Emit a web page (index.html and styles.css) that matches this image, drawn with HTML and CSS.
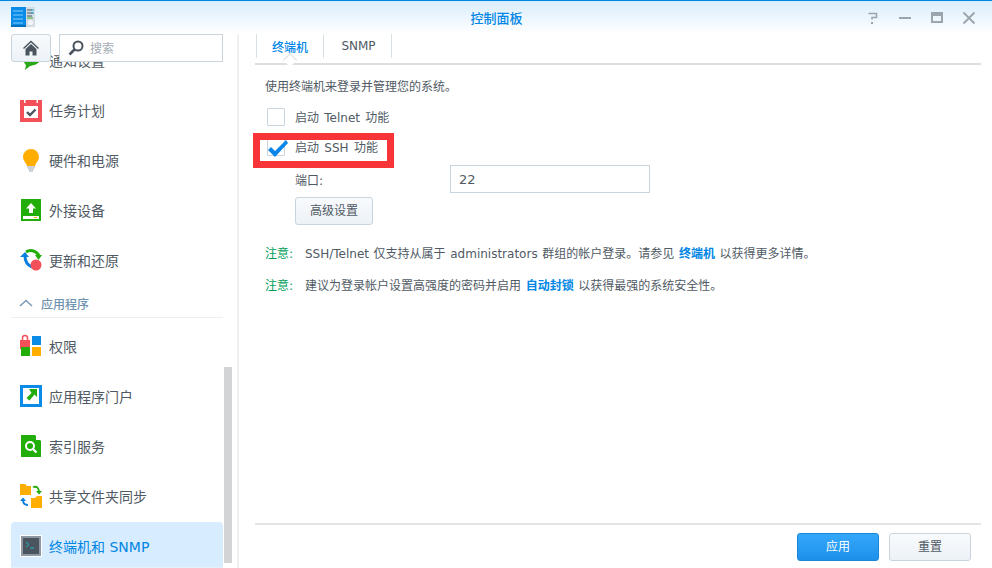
FILE: index.html
```html
<!DOCTYPE html>
<html lang="zh-CN">
<head>
    <meta charset="UTF-8">
    <title>控制面板</title>
    <link rel="stylesheet" href="styles.css">
</head>
<body>
    <div class="title-bar">
        <svg class="app-icon" width="24" height="21" viewBox="0 0 24 21">
            <rect x="0" y="0" width="15" height="20" fill="#0a8be8"/>
            <rect x="0" y="18" width="15" height="2" fill="#0670bd"/>
            <path d="M2 4h10M2 8h10M2 12h10M2 16h10" stroke="#7fd0fb" stroke-width="1"/>
            <rect x="15" y="0" width="9" height="20" fill="#d5dde3"/>
            <path d="M16 3h5M16 6h6M16 9h5" stroke="#44525e" stroke-width="1"/>
            <path d="M20 3h3M20 6h3" stroke="#18a9d8" stroke-width="1"/>
            <path d="M16 11h6" stroke="#3eb32a" stroke-width="1"/>
            <circle cx="19.5" cy="15.5" r="2.6" fill="#f2f5f7"/>
        </svg>
        <div class="window-title">控制面板</div>
        <div class="window-btns">
            <svg width="14" height="14" viewBox="0 0 14 14"><path d="M2.5 2.5h8v4H6v2" fill="none" stroke="#9aa5ae" stroke-width="1.6"/><rect x="5" y="11" width="2" height="2" fill="#9aa5ae"/></svg>
            <svg width="14" height="14" viewBox="0 0 14 14"><rect x="1" y="6" width="12" height="2" fill="#9aa5ae"/></svg>
            <svg width="14" height="14" viewBox="0 0 14 14"><path d="M1 1h12v11H1z M3 5v5h8V5z" fill="#9aa5ae" fill-rule="evenodd"/></svg>
            <svg width="14" height="14" viewBox="0 0 14 14"><path d="M1.5 1.5l11 11M12.5 1.5l-11 11" stroke="#9aa5ae" stroke-width="1.8"/></svg>
        </div>
    </div>

    <div class="panel">
        <div class="sidebar">
            <div class="side-tools">
                <div class="home-btn">
                    <svg width="16" height="16" viewBox="0 0 16 16"><path d="M8 0.5L0 8l1 1 7-6.400L15 9l1-1z M2.500 9L8 4l5.500 5v6.500H9.500v-4h-3v4h-4z" fill="#4a5560"/></svg>
                </div>
                <div class="search-box">
                    <svg width="16" height="16" viewBox="0 0 16 16"><circle cx="10" cy="6" r="4.500" fill="none" stroke="#4a5560" stroke-width="2"/><path d="M6.500 9.500L1.500 14.500" stroke="#4a5560" stroke-width="2.600"/></svg>
                    <span>搜索</span>
                </div>
            </div>

            <ul class="side-list">
                <li class="side-item">
                    <svg width="22" height="24" viewBox="0 0 22 24"><path d="M2 4h18v8c-2 5-6 5-10 6l-5 4 1-5c-2-2-4-6-4-13z" fill="#2aa81a"/></svg>
                    <span>通知设置</span>
                </li>
                <li class="side-item">
                    <svg width="22" height="24" viewBox="0 0 22 24"><path d="M0 2h22v22H0z" fill="#f4505a"/><rect x="4" y="8" width="14" height="12" fill="#fff"/><rect x="4" y="2" width="1.500" height="3" fill="#fff"/><rect x="16.500" y="2" width="1.500" height="3" fill="#fff"/><path d="M7 14l3 3 5.500-5.500" fill="none" stroke="#4a5560" stroke-width="2.400"/></svg>
                    <span>任务计划</span>
                </li>
                <li class="side-item">
                    <svg width="22" height="24" viewBox="0 0 22 24"><path d="M11 1a8 8 0 0 1 8 8c0 4-3 5-4 9H7c-1-4-4-5-4-9a8 8 0 0 1 8-8z" fill="#ffae00"/><path d="M7 19h8M8 21h6M9 23h4" stroke="#9aa5ae" stroke-width="1"/></svg>
                    <span>硬件和电源</span>
                </li>
                <li class="side-item">
                    <svg width="22" height="24" viewBox="0 0 22 24"><rect x="1" y="1" width="20" height="22" fill="#22ad0a"/><path d="M11 5l5 5.500h-3V15H9v-4.500H6z" fill="#fff"/><rect x="3" y="18" width="16" height="3" fill="#fff"/><rect x="14" y="19" width="3" height="1" fill="#ffae00"/></svg>
                    <span>外接设备</span>
                </li>
                <li class="side-item">
                    <svg width="22" height="24" viewBox="0 0 22 24"><path d="M6 4a9 9 0 0 1 13 4" fill="none" stroke="#22ad0a" stroke-width="3"/><path d="M15 7h7l-3.500 5z" fill="#22ad0a"/><path d="M5 8c0 5 2 9 7 11" fill="none" stroke="#0a7fe0" stroke-width="3"/><path d="M0 9l5-5 4 5z" fill="#0a7fe0"/><circle cx="16" cy="17" r="5.500" fill="#f4505a"/></svg>
                    <span>更新和还原</span>
                </li>
                <li class="side-group">
                    <svg width="14" height="8" viewBox="0 0 14 8"><path d="M1 7l6-5.500L13 7" fill="none" stroke="#7b9ab5" stroke-width="1.600"/></svg>
                    <span>应用程序</span>
                </li>
                <li class="side-item">
                    <svg width="22" height="24" viewBox="0 0 22 24"><path d="M0 6h10v9H0z" fill="#f4505a"/><path d="M2.500 7V4a2.500 2.500 0 0 1 5 0v3" fill="none" stroke="#f4505a" stroke-width="1.500"/><rect x="12" y="2" width="9" height="9" fill="#0a8be8"/><rect x="1" y="13" width="9" height="9" fill="#22ad0a"/><rect x="12" y="13" width="9" height="9" fill="#ffae00"/></svg>
                    <span>权限</span>
                </li>
                <li class="side-item">
                    <svg width="22" height="24" viewBox="0 0 22 24"><rect x="0" y="1" width="22" height="22" fill="#0a8be8"/><rect x="3" y="4" width="16" height="16" fill="#fff"/><path d="M9 5h8v8l-2.500-2.500-5 6-3-2.500 5-5z" fill="#22ad0a"/></svg>
                    <span>应用程序门户</span>
                </li>
                <li class="side-item">
                    <svg width="22" height="24" viewBox="0 0 22 24"><path d="M1 1h14l6 6v16H1z" fill="#22ad0a"/><path d="M16 1l5 5h-5z" fill="#fff"/><circle cx="10" cy="12" r="4" fill="none" stroke="#fff" stroke-width="2"/><path d="M13 15l3.500 3.500" stroke="#fff" stroke-width="2.200"/></svg>
                    <span>索引服务</span>
                </li>
                <li class="side-item">
                    <svg width="22" height="24" viewBox="0 0 22 24"><path d="M0 0h5l2 2h4v9H0z" fill="#ffae00"/><path d="M11 14h4l2-2 5 0v12H11z" fill="#ffae00"/><path d="M13 3c4-1 6 1 6 5" fill="none" stroke="#22ad0a" stroke-width="1.800"/><path d="M16 7h6l-3 3.500z" fill="#22ad0a"/><path d="M8 21c-3 0-5-1-5-5" fill="none" stroke="#0a7fe0" stroke-width="1.800"/><path d="M0 17h6l-3-3.500z" fill="#0a7fe0"/></svg>
                    <span>共享文件夹同步</span>
                </li>
                <li class="side-item active">
                    <svg width="22" height="24" viewBox="0 0 22 24"><rect x="0" y="1" width="22" height="22" fill="#fff"/><rect x="1" y="2" width="20" height="20" fill="#8c97a3"/><rect x="3" y="4" width="16" height="16" fill="#4a5560"/><path d="M6 8l3 2.500L6 13" fill="none" stroke="#1fb6c4" stroke-width="1"/><path d="M10 14h4" stroke="#1fb6c4" stroke-width="1"/></svg>
                    <span>终端机和 SNMP</span>
                </li>
            </ul>
            <div class="scroll-thumb"></div>
        </div>

        <div class="main">
            <div class="tabs">
                <div class="tab current">终端机</div>
                <div class="tab">SNMP</div>
            </div>

            <div class="content">
                <p class="intro">使用终端机来登录并管理您的系统。</p>
                <div class="check-row">
                    <span class="check"></span>
                    <span class="check-label">启动 Telnet 功能</span>
                </div>
                <div class="check-row ssh-row">
                    <span class="check">
                        <svg width="22" height="20" viewBox="0 0 22 20"><path d="M1 10l3-3 4 4L19 0l2 3L8 17z" fill="#0a86e8"/></svg>
                    </span>
                    <span class="check-label">启动 SSH 功能</span>
                    <div class="highlight"></div>
                </div>
                <div class="port-row">
                    <label>端口:</label>
                    <div class="port-input">22</div>
                </div>
                <div class="adv-btn">高级设置</div>
                <p class="note"><b>注意:</b>SSH/Telnet 仅支持从属于 administrators 群组的帐户登录。请参见 <a>终端机</a> 以获得更多详情。</p>
                <p class="note"><b>注意:</b>建议为登录帐户设置高强度的密码并启用 <a>自动封锁</a> 以获得最强的系统安全性。</p>
            </div>

            <div class="footer">
                <div class="btn primary">应用</div>
                <div class="btn">重置</div>
            </div>
        </div>
    </div>
</body>
</html>
```
FILE: styles.css
```css
* {
    padding: 0;
    margin: 0;
    box-sizing: border-box;
    font-family: "DejaVu Sans", "Noto Sans CJK SC", sans-serif;
}
html, body {
    height: 100%;
    overflow: hidden;
}
body {
    background: white;
    color: #505a64;
    font-size: 12px;
    display: flex;
    flex-direction: column;
}
.title-bar {
    height: 34px;
    flex-shrink: 0;
    border-top: 1px solid #0086e5;
    background: linear-gradient(#d9edfc, #ffffff);
    display: grid;
    grid-template-columns: 1fr auto 1fr;
    align-items: center;
    padding: 0 16px 0 11px;
}
.app-icon {
    margin-top: -1px;
}
.window-title {
    color: #0086e5;
    font-size: 13px;
    font-weight: 500;
    padding-left: 6px;
}
.window-btns {
    display: flex;
    justify-content: flex-end;
    gap: 18px;
}
.panel {
    flex-grow: 1;
    display: flex;
    min-height: 0;
}
.sidebar {
    width: 239px;
    flex-shrink: 0;
    border-right: 2px solid #eef0f2;
    position: relative;
    overflow: hidden;
}
.side-tools {
    position: absolute;
    top: 0;
    left: 11px;
    display: flex;
    gap: 8px;
    z-index: 2;
}
.home-btn {
    width: 40px;
    height: 28px;
    border: 1px solid #c8d4de;
    border-radius: 3px;
    background: linear-gradient(#f8fafc, #edf2f7);
    display: flex;
    align-items: center;
    justify-content: center;
}
.search-box {
    width: 164px;
    height: 28px;
    border: 1px solid #c8d4de;
    background: white;
    display: flex;
    align-items: center;
    gap: 6px;
    padding-left: 8px;
    color: #a4acb4;
}
.search-box span {
    margin-top: -2px;
}
.side-list {
    list-style: none;
    padding-top: 2px;
}
.side-item {
    height: 50px;
    margin: 0 14px 0 11px;
    padding: 0 0 2px 9px;
    display: flex;
    align-items: center;
    gap: 7px;
    font-size: 14px;
    color: #505a64;
}
.side-item svg {
    flex-shrink: 0;
}
.side-item.active {
    color: #0086e5;
    border-radius: 4px 4px 0 0;
    background: linear-gradient(#d7ecfe 88%, #ffffff);
}
.side-group {
    height: 32px;
    margin: 0 14px 4px 11px;
    padding: 3px 0 0 8px;
    border-bottom: 1px solid #eef0f2;
    display: flex;
    align-items: center;
    gap: 8px;
    color: #6f92b0;
    font-weight: 500;
}
.scroll-thumb {
    position: absolute;
    top: 333px;
    left: 224px;
    width: 8px;
    height: 196px;
    background: #d2d4d6;
}
.main {
    flex-grow: 1;
    display: flex;
    flex-direction: column;
    margin: 0 11px 0 16px;
    min-width: 0;
}
.tabs {
    height: 31px;
    flex-shrink: 0;
    border-bottom: 2px solid #dcdfe1;
    display: flex;
    align-items: flex-start;
    padding-left: 1px;
    position: relative;
}
.tab {
    width: 68px;
    height: 24px;
    border-right: 1px solid #d8e0e6;
    padding-left: 2px;
    display: flex;
    align-items: center;
    justify-content: center;
    color: #505a64;
}
.tab.current {
    border-left: 1px solid #d8e0e6;
    padding-left: 0;
    color: #0086e5;
    font-weight: 500;
    position: relative;
}
.tab.current::after {
    content: "";
    position: absolute;
    left: 28px;
    bottom: -7px;
    width: 9px;
    height: 9px;
    background: white;
    border-left: 1px solid #dcdfe1;
    border-top: 1px solid #dcdfe1;
    transform: rotate(45deg);
}
.content {
    flex-grow: 1;
    padding: 13px 0 0 10px;
}
.intro {
    line-height: 18px;
}
.check-row {
    display: flex;
    align-items: center;
    gap: 10px;
    height: 20px;
    margin: 11px 0 0 2px;
    position: relative;
}
.ssh-row {
    margin-top: 10px;
}
.check-label {
    margin-top: -2px;
    word-spacing: 1.5px;
}
.check {
    width: 18px;
    height: 18px;
    border: 1px solid #c8d4de;
    border-radius: 1px;
    background: white;
    position: relative;
}
.check svg {
    position: absolute;
    left: -1px;
    top: 1px;
}
.highlight {
    position: absolute;
    left: -14px;
    top: -4px;
    width: 141px;
    height: 35px;
    border: 7px solid #f73539;
}
.port-row {
    display: flex;
    align-items: center;
    margin: 8px 0 0 30px;
}
.port-row label {
    width: 155px;
}
.port-input {
    width: 200px;
    height: 28px;
    border: 1px solid #c8d4de;
    padding-left: 8px;
    line-height: 28px;
    font-size: 13px;
}
.adv-btn {
    width: 78px;
    height: 28px;
    margin: 4px 0 0 30px;
    border: 1px solid #c8d4de;
    border-radius: 3px;
    background: linear-gradient(#f8fafc, #edf2f7);
    text-align: center;
    line-height: 26px;
}
.note {
    margin-top: 14px;
    line-height: 18px;
    word-spacing: 0.8px;
}
.adv-btn + .note {
    margin-top: 20px;
}
.note b {
    display: inline-block;
    width: 40px;
    color: #00a05a;
    font-weight: 400;
}
.note a {
    color: #0086e5;
    font-weight: 700;
}
.footer {
    height: 45px;
    flex-shrink: 0;
    border-top: 2px solid #e2e4e6;
    display: flex;
    justify-content: flex-end;
    gap: 10px;
    padding: 8px 10px 0 0;
}
.btn {
    width: 82px;
    height: 28px;
    border: 1px solid #c8d4de;
    border-radius: 3px;
    background: linear-gradient(#f8fafc, #edf2f7);
    text-align: center;
    line-height: 26px;
}
.btn.primary {
    border-color: #1a87d8;
    background: linear-gradient(#36a8fb, #1c90ea);
    color: white;
}
```
